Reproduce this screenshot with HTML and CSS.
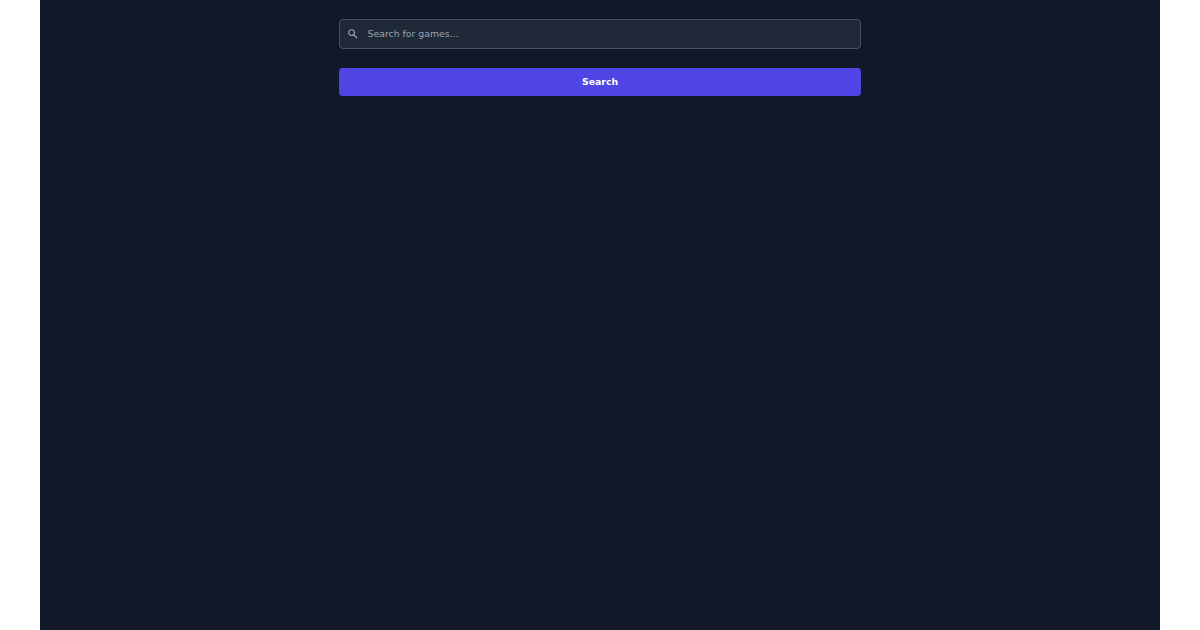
FILE: index.html
```html
<!DOCTYPE html>
<html lang="en">
<head>
    <meta charset="UTF-8">
    <meta name="viewport" content="width=device-width, initial-scale=1.0">
    <title>Game search</title>
    <link rel="stylesheet" href="styles.css">
</head>
<body>
    <div class="container">
        <form class="search-form">
            <div class="search-box">
                <svg class="search-icon" viewBox="0 0 20 20" fill="currentColor">
                    <path fill-rule="evenodd" clip-rule="evenodd" d="M8 4a4 4 0 100 8 4 4 0 000-8zM2 8a6 6 0 1110.89 3.476l4.817 4.817a1 1 0 01-1.414 1.414l-4.816-4.816A6 6 0 012 8z"/>
                </svg>
                <input class="search-input" type="text" placeholder="Search for games...">
            </div>
            <button class="search-btn" type="button">Search</button>
        </form>
    </div>
</body>
</html>
```

FILE: styles.css
```css
* {
    box-sizing: border-box;
}

body {
    margin: 0;
    background-color: #ffffff;
    font-family: "DejaVu Sans", sans-serif;
}

.container {
    width: 1120px;
    height: 630px;
    margin: 0 auto;
    padding-top: 19px;
    background-color: #111827;
    overflow: hidden;
}

.search-form {
    display: flex;
    flex-direction: column;
    gap: 19px;
    width: 522px;
    margin: 0 auto;
}

.search-box {
    display: flex;
    align-items: center;
    gap: 9px;
    height: 30px;
    padding: 0 0 2px 7px;
    background-color: #1f2937;
    border: 1px solid #465161;
    border-radius: 4px;
}

.search-icon {
    flex: none;
    width: 11.5px;
    height: 11.5px;
    margin-top: 2px;
    color: #9ca3af;
}

.search-input {
    flex: 1;
    min-width: 0;
    padding: 0;
    background: transparent;
    border: none;
    outline: none;
    color: #ffffff;
    font-family: inherit;
    font-size: 9.33px;
}

.search-input::placeholder {
    color: #9ca3af;
    opacity: 1;
}

.search-btn {
    height: 28px;
    padding: 0 0 2px;
    background-color: #4f46e5;
    border: none;
    border-radius: 4px;
    color: #ffffff;
    font-family: inherit;
    font-size: 9.33px;
    font-weight: 700;
}
```
